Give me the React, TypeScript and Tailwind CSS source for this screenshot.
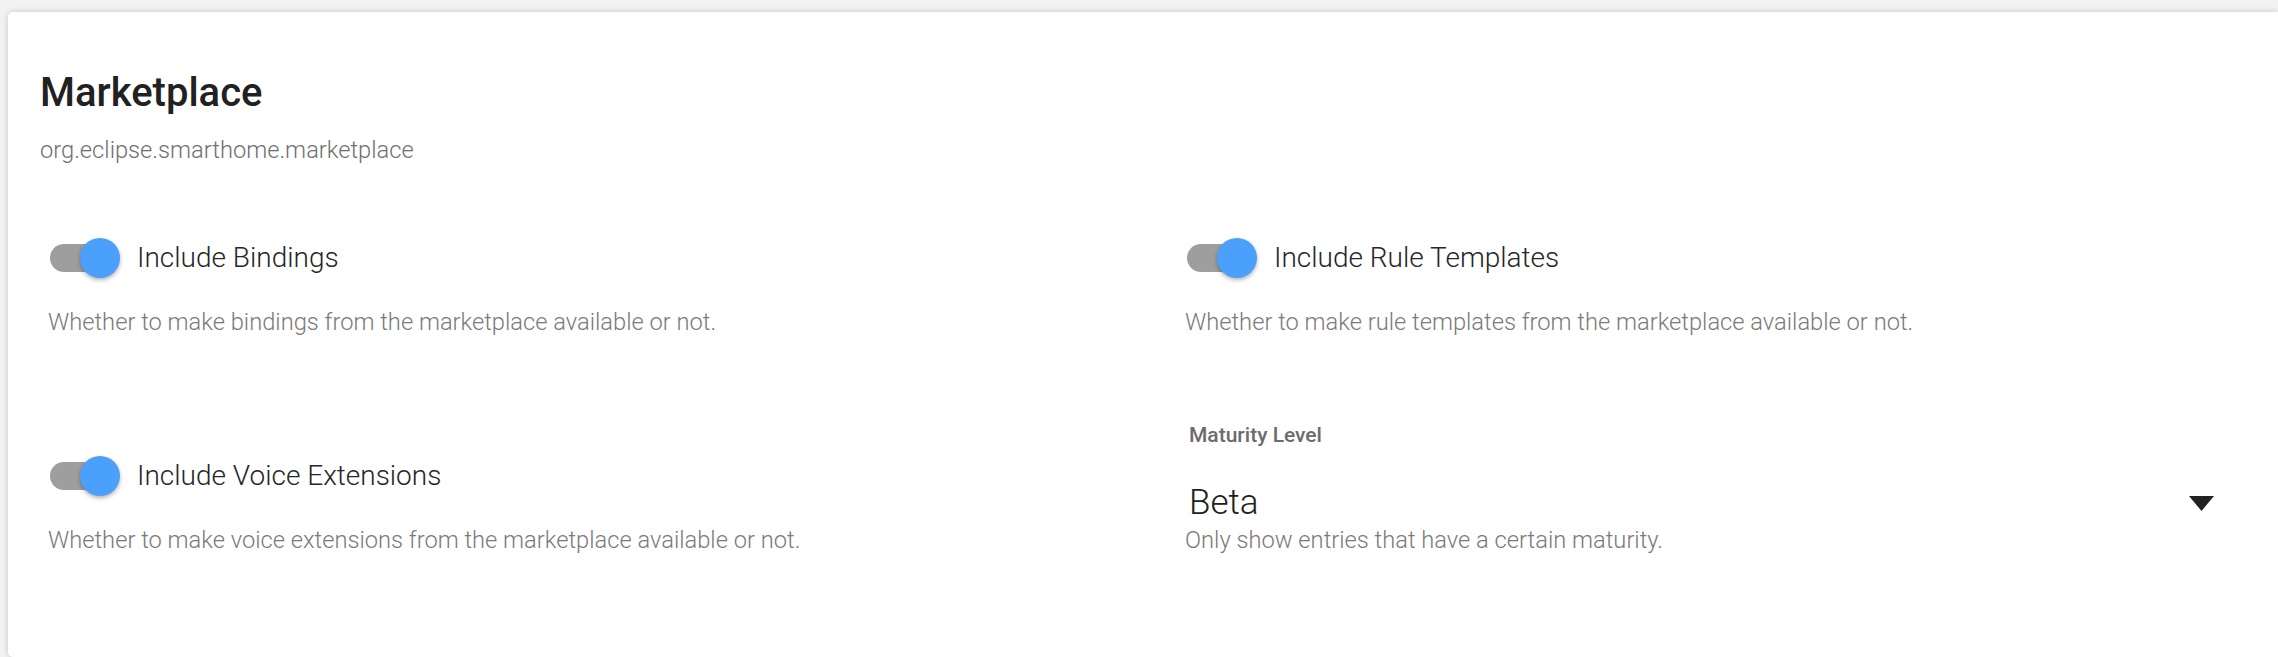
import { useState } from "react";

function Toggle({ on, onChange }: { on: boolean; onChange: (v: boolean) => void }) {
  return (
    <button
      type="button"
      onClick={() => onChange(!on)}
      className="relative w-[70px] h-[40px] shrink-0"
    >
      <span className="absolute left-0 top-[6px] w-[60px] h-[28px] rounded-full bg-[#9e9e9e]" />
      <span
        className={`absolute top-0 w-[40px] h-[40px] rounded-full shadow-[0_2px_4px_rgba(0,0,0,0.3)] ${
          on ? "left-[30px] bg-[#4aa0fa]" : "left-0 bg-[#fafafa]"
        }`}
      />
    </button>
  );
}

function ToggleSetting({ label, description }: { label: string; description: string }) {
  const [on, setOn] = useState(true);
  return (
    <div className="flex flex-col">
      <div className="flex items-center h-[48px] gap-[17px] pl-[2px]">
        <Toggle on={on} onChange={setOn} />
        <span className="text-[28px] font-light text-[#262626]">{label}</span>
      </div>
      <p className="mt-[25px] text-[23.7px] leading-[30px] font-light text-[#7a7a7a]">{description}</p>
    </div>
  );
}

export default function App() {
  return (
    <div className="h-[657px] overflow-hidden bg-[#f2f2f2] pt-[12px] pl-[8px] font-['Roboto',sans-serif]">
      <div className="h-full bg-white rounded-l-[5px] shadow-[0_0_6px_rgba(0,0,0,0.18)] pt-[57px] pl-[32px] pr-[48px]">
        <h1 className="text-[40px] leading-[48px] font-medium text-[#212121]">Marketplace</h1>
        <p className="mt-[17px] text-[23.7px] leading-[32px] font-light text-[#6f6f6f]">org.eclipse.smarthome.marketplace</p>

        <div className="grid grid-cols-[1137px_1fr] gap-y-[85px] mt-[68px] pl-[8px]">
          <ToggleSetting
            label="Include Bindings"
            description="Whether to make bindings from the marketplace available or not."
          />
          <ToggleSetting
            label="Include Rule Templates"
            description="Whether to make rule templates from the marketplace available or not."
          />
          <div className="self-end">
            <ToggleSetting
              label="Include Voice Extensions"
              description="Whether to make voice extensions from the marketplace available or not."
            />
          </div>
          <div className="flex flex-col">
            <label className="pl-[4px] text-[21px] leading-[26px] font-medium text-[#6b6b6b]">Maturity Level</label>
            <div className="mt-[33px] flex items-center justify-between h-[44px] pl-[4px]">
              <span className="text-[35px] leading-[44px] font-light text-[#212121]">Beta</span>
              <svg width="25" height="15" viewBox="0 0 25 15" className="mr-[16px]">
                <path d="M0 0h25L12.5 15z" fill="#212121" />
              </svg>
            </div>
            <p className="text-[23.7px] leading-[30px] font-light text-[#7a7a7a]">Only show entries that have a certain maturity.</p>
          </div>
        </div>
      </div>
    </div>
  );
}
